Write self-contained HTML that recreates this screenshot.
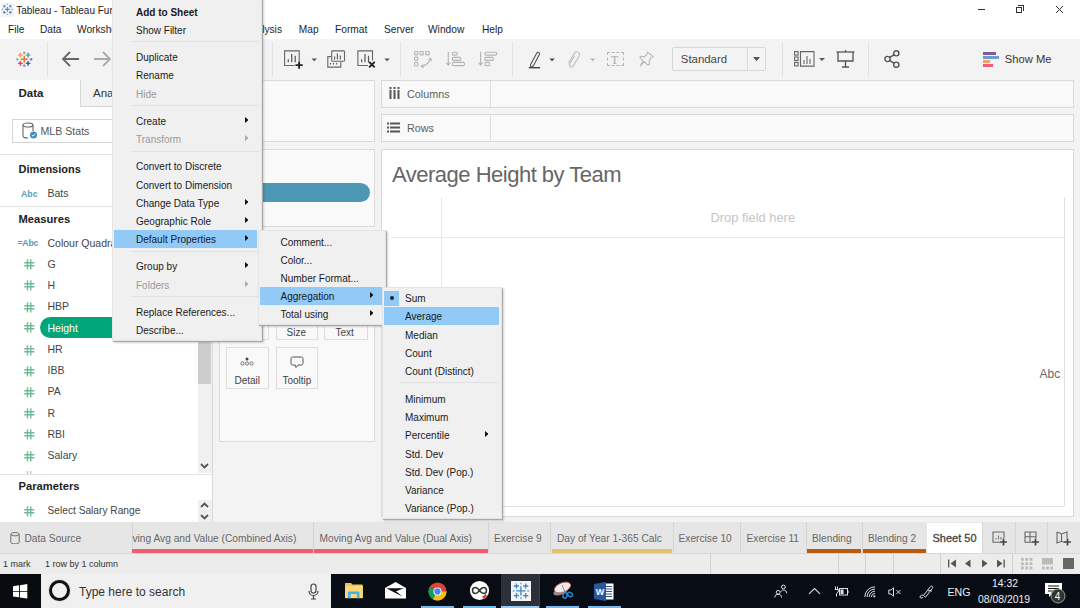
<!DOCTYPE html>
<html><head><meta charset="utf-8">
<style>
*{margin:0;padding:0;box-sizing:border-box}
html,body{width:1080px;height:608px;overflow:hidden;background:#fff;font-family:"Liberation Sans",sans-serif;color:#333}
.a{position:absolute}
.t{position:absolute;white-space:nowrap;line-height:1}
.mb{font-size:10.2px;color:#1e1e1e;top:25.3px}
.li{font-size:10.5px;color:#444}
.hash{position:absolute;width:11px;height:11px}
.menu{position:absolute;background:#f0f0f0;border:1px solid #e4e4e4;box-shadow:1px 1px 0 #a9a9a9,2px 2px 2px rgba(0,0,0,.18)}
.mi{font-size:10px;color:#1a1a1a}
.dis{color:#9a9a9a}
.sep{position:absolute;height:1px;background:#e0e0e0}
.tab{font-size:10.2px;color:#666;top:533.8px}
.vd{position:absolute;width:1px;background:#d0d0d0}
</style></head><body>
<!-- ============ TITLE BAR ============ -->
<div class="a" style="left:1.3px;top:2.5px;width:13.2px;height:14px;background:#f3f3f3"></div>
<svg class="a" style="left:0;top:0" width="16" height="18" viewBox="0 0 16 18"><g stroke="#4a8fc9" stroke-width="1.1"><path d="M7.4 7v4.8M5 9.4h4.8"/><path d="M4.3 5v2.6M3 6.3h2.6M10.3 5v2.6M9 6.3h2.6M4.3 11.1v2.6M3 12.4h2.6M10.3 11.1v2.6M9 12.4h2.6"/></g><g fill="#7fb0d9"><circle cx="7.3" cy="4.3" r=".8"/><circle cx="2.5" cy="9.4" r=".8"/><circle cx="12.1" cy="9.4" r=".8"/><circle cx="7.3" cy="14.3" r=".8"/></g></svg>
<div class="t" style="left:16.2px;top:5.6px;font-size:10px;color:#1e1e1e">Tableau - Tableau Fun</div>
<div class="a" style="left:978px;top:9px;width:7px;height:1px;background:#333"></div>
<div class="a" style="left:1016px;top:7px;width:6px;height:6px;border:1px solid #333"></div>
<div class="a" style="left:1018px;top:5px;width:6px;height:6px;border-top:1px solid #333;border-right:1px solid #333"></div>
<svg class="a" style="left:1055px;top:5px" width="9" height="9" viewBox="0 0 9 9"><path d="M1 1L8 8M8 1L1 8" stroke="#333" stroke-width="1"/></svg>
<!-- ============ MENU BAR ============ -->
<div class="t mb" style="left:8px">File</div>
<div class="t mb" style="left:40px">Data</div>
<div class="t mb" style="left:77px">Workshe</div>
<div class="t mb" style="left:256.5px">alysis</div>
<div class="t mb" style="left:298.8px">Map</div>
<div class="t mb" style="left:335px">Format</div>
<div class="t mb" style="left:384px">Server</div>
<div class="t mb" style="left:428px">Window</div>
<div class="t mb" style="left:482px">Help</div>
<!-- ============ TOOLBAR ============ -->
<div class="a" style="left:0;top:38.7px;width:1080px;height:42px;background:#f3f3f3;border-bottom:1px solid #d6d6d6"></div>
<div class="vd" style="left:47px;top:42px;height:35px;background:#e2e2e2"></div>
<div class="vd" style="left:272px;top:42px;height:35px;background:#e2e2e2"></div>
<div class="vd" style="left:400px;top:42px;height:35px;background:#e2e2e2"></div>
<div class="vd" style="left:512px;top:42px;height:35px;background:#e2e2e2"></div>
<div class="vd" style="left:782px;top:42px;height:35px;background:#e2e2e2"></div>
<div class="vd" style="left:868px;top:42px;height:35px;background:#e2e2e2"></div>
<!-- tableau logo -->
<svg class="a" style="left:16px;top:51.2px" width="16.5" height="16.5" viewBox="0 0 18 18">
<g stroke-width="1.6">
<path d="M9 5.2v7.6M5.2 9h7.6" stroke="#e8762d"/>
<path d="M4.8 2v5M2.3 4.5h5" stroke="#f0a13b"/>
<path d="M13.2 2v5M10.7 4.5h5" stroke="#5b9bb3"/>
<path d="M4.8 11v5M2.3 13.5h5" stroke="#d8405a"/>
<path d="M13.2 11v5M10.7 13.5h5" stroke="#2f5ea0"/>
</g>
<g stroke-width="1.3">
<path d="M9 0.5v3M7.5 2h3" stroke="#7aaecc"/>
<path d="M1.5 7.5v3M0 9h3" stroke="#7aaecc"/>
<path d="M16.5 7.5v3M15 9h3" stroke="#6a6fb0"/>
<path d="M9 14.5v3M7.5 16h3" stroke="#8d91c4"/>
</g></svg>
<!-- back / forward -->
<svg class="a" style="left:61px;top:50px" width="19" height="18" viewBox="0 0 19 18"><path d="M18 9H2M9 2L2 9l7 7" fill="none" stroke="#666" stroke-width="1.8"/></svg>
<svg class="a" style="left:93px;top:50px" width="19" height="18" viewBox="0 0 19 18"><path d="M1 9h16M10 2l7 7-7 7" fill="none" stroke="#aaa" stroke-width="1.8"/></svg>
<!-- new worksheet -->
<svg class="a" style="left:0;top:0" width="660" height="80" viewBox="0 0 660 80">
<g fill="none" stroke="#666" stroke-width="1.1">
<path d="M294.7 65.5H284.6V50.9h14.6v10"/>
<path d="M288.3 62.3v-3M291.7 62.3v-8.2M295.2 62.3v-6.6" stroke="#555" stroke-width="1.2"/>
<rect x="331.7" y="50.9" width="12.8" height="10.4" rx=".8"/>
<path d="M331 56.6h-3.2v10.5h13v-5"/>
<path d="M334.6 59.5v-3M337.4 59.5v-6M340.3 59.5v-4" stroke="#555" stroke-width="1.1"/>
<path d="M330.5 64.5v-1.5M333.5 64.5v-1.5M336.5 64.5v-1.5" stroke="#555"/>
<path d="M368 65.5H357.9V50.9h14.6v9.5"/>
<path d="M361.6 62.3v-3M365 62.3v-8.2M368.5 62.3v-6.6" stroke="#555" stroke-width="1.2"/>
</g>
<path d="M299.1 61.5v7.2M295.5 65.1h7.2" stroke="#222" stroke-width="1.9"/>
<path d="M369.1 61.8l5.6 5.6M374.7 61.8l-5.6 5.6" stroke="#222" stroke-width="1.9"/>
<path d="M311.5 58.6h5.5l-2.75 2.6z" fill="#555"/>
<path d="M384.3 58.6h5.5l-2.75 2.6z" fill="#555"/>
<g fill="none" stroke="#b5b5b5" stroke-width="1.1">
<rect x="414.6" y="51.5" width="3.2" height="3.4" rx=".6"/><rect x="420" y="51.5" width="3.3" height="3.4" rx=".6"/><rect x="425.6" y="51.5" width="3.6" height="3.4" rx=".6"/>
<rect x="414.6" y="57" width="3.2" height="3.5" rx=".6"/><rect x="414.6" y="62.5" width="3.2" height="3.5" rx=".6"/>
<path d="M421.5 66.5c4-1 7.5-3.5 9-7.8"/><path d="M428.6 60l2-1.8 1 2.6M423.3 64.7l-2 1.8 2.6 1"/>
<path d="M448.3 51.8v13M446.3 62.6l2 2.5 2-2.5"/>
<rect x="452.4" y="52.3" width="4.8" height="2.8" rx="1"/><rect x="452.4" y="57.4" width="8.2" height="3" rx="1"/><rect x="452.4" y="62.4" width="12" height="3.2" rx="1"/>
<path d="M480.6 51.8v13M478.6 62.6l2 2.5 2-2.5"/>
<rect x="484.9" y="52.3" width="11.8" height="2.8" rx="1"/><rect x="484.9" y="57.4" width="8.4" height="3" rx="1"/><rect x="484.9" y="62.4" width="4.8" height="3.2" rx="1"/>
</g>
<!-- pen -->
<path d="M530.6 64.5l6.2-11.6c.3-.6 1-.8 1.6-.5l.6.3c.6.3.8 1 .5 1.6l-6.2 11.6-2.7 1.3z" fill="none" stroke="#555" stroke-width="1.1" stroke-linejoin="round"/>
<path d="M528.8 67.7h11.3" stroke="#444" stroke-width="1.4"/>
<path d="M549.3 58.6h5.5l-2.75 2.6z" fill="#444"/>
<!-- paperclip -->
<path d="M574.5 56l-4.6 7.6c-.8 1.4-.4 2.6.6 3.1s2.2.1 3-1.3l5.3-9c1.2-2 .6-3.6-.8-4.3s-3-.2-4.2 1.8l-5.4 9.4" fill="none" stroke="#b9b9b9" stroke-width="1.05"/>
<path d="M590 58.6h5.5l-2.75 2.6z" fill="#b5b5b5"/>
<!-- pin -->
<path d="M647.5 52.2l5.9 4.4-2.5 1.2-1.7 3.4.2 3.1-1.6 1-3.2-3.8-4.3 4.4 2.7-5-3.3-3.4 1.4-1.2 3.1.6 2.6-2.2z" fill="none" stroke="#b3b3b3" stroke-width="1.05" stroke-linejoin="round"/>
</svg>
<!-- T box -->
<div class="a" style="left:607px;top:52px;width:17px;height:14px;border:1px dashed #b4b4b4"></div>
<div class="t" style="left:611px;top:54px;font-family:'Liberation Serif',serif;font-size:12px;color:#a8a8a8">T</div>
<!-- standard dropdown -->
<div class="a" style="left:672px;top:47px;width:94px;height:24px;background:#f4f4f4;border:1px solid #d6d6d6;border-radius:2px"></div>
<div class="a" style="left:747px;top:48px;width:1px;height:22px;background:#dcdcdc"></div>
<div class="t" style="left:680.8px;top:54px;font-size:11.4px;color:#444">Standard</div>
<svg class="a" style="left:753.3px;top:57.3px" width="7" height="4.5" viewBox="0 0 7 4.5"><path d="M0 0h7L3.5 4.2z" fill="#555"/></svg>
<!-- show cards icon -->
<svg class="a" style="left:794px;top:51px" width="21" height="16" viewBox="0 0 21 16"><g fill="none" stroke="#666" stroke-width="1.1"><rect x="0.6" y="0.6" width="3.5" height="3.5"/><rect x="0.6" y="6" width="3.5" height="3.5"/><rect x="0.6" y="11.4" width="3.5" height="3.5"/><path d="M6.5 0.6h13.5v14.5H6.5z"/><path d="M10 13V9M13 13V5M16 13V8"/></g></svg>
<svg class="a" style="left:819px;top:58px" width="7" height="4" viewBox="0 0 7 4"><path d="M0 0h6L3 3z" fill="#555"/></svg>
<!-- presentation -->
<svg class="a" style="left:836px;top:50px" width="19" height="18" viewBox="0 0 19 18"><g fill="none" stroke="#555" stroke-width="1.3"><path d="M0.5 2h18"/><path d="M9.5 0v2M2 2v9h15V2M9.5 11v6M6 17h7"/></g></svg>
<!-- share -->
<svg class="a" style="left:884px;top:50px" width="16" height="18" viewBox="0 0 16 18"><g fill="none" stroke="#555" stroke-width="1.4"><circle cx="3.5" cy="9" r="2.6"/><circle cx="12.3" cy="3.3" r="2.6"/><circle cx="12.3" cy="14.7" r="2.6"/><path d="M5.7 7.6l4.4-2.9M5.7 10.4l4.4 2.9"/></g></svg>
<!-- show me -->
<div class="a" style="left:983px;top:51.9px;width:13px;height:2.8px;background:#7b5f95"></div>
<div class="a" style="left:983px;top:55.9px;width:16.4px;height:2.7px;background:#6f9bcf"></div>
<div class="a" style="left:983px;top:60px;width:7px;height:2.6px;background:#f3a26b"></div>
<div class="a" style="left:983px;top:64px;width:10px;height:2.7px;background:#f0607a"></div>
<div class="t" style="left:1004.8px;top:53.5px;font-size:11.2px;color:#333">Show Me</div>

<!-- ============ LEFT PANE ============ -->
<div class="a" style="left:0;top:80px;width:212px;height:442px;background:#fff"></div>
<div class="a" style="left:212px;top:80px;width:1px;height:442px;background:#d8d8d8"></div>
<div class="a" style="left:80px;top:80px;width:132px;height:27px;background:#f3f3f3;border-left:1px solid #d6d6d6;border-bottom:1px solid #d6d6d6"></div>
<div class="t" style="left:18.5px;top:88px;font-size:11.5px;font-weight:bold;color:#222">Data</div>
<div class="t" style="left:93px;top:88px;font-size:11.5px;color:#333">Analytics</div>
<div class="a" style="left:12px;top:119px;width:200px;height:24px;border:1px solid #d6d6d6;background:#fff"></div>
<svg class="a" style="left:22px;top:122px" width="16" height="18" viewBox="0 0 16 18"><g fill="none" stroke="#666" stroke-width="1.1"><ellipse cx="6" cy="3" rx="5" ry="2"/><path d="M1 3v11c0 1.2 2.2 2 5 2"/><path d="M11 3v6"/></g><circle cx="11.5" cy="13" r="3.5" fill="#3b8fbf"/><path d="M9.8 13l1.2 1.2 2.2-2.4" fill="none" stroke="#fff" stroke-width="1"/></svg>
<div class="t" style="left:40.5px;top:126px;font-size:10.6px;color:#555">MLB Stats</div>
<div class="a" style="left:0;top:154px;width:212px;height:1px;background:#e3e3e3"></div>
<div class="t" style="left:18.5px;top:164px;font-size:11px;font-weight:bold;color:#222">Dimensions</div>
<div class="t" style="left:21px;top:189.5px;font-size:8.8px;font-weight:bold;color:#5b9db6">Abc</div>
<div class="t li" style="left:47.5px;top:188.0px">Bats</div>
<div class="a" style="left:0;top:206px;width:212px;height:1px;background:#e3e3e3"></div>
<div class="t" style="left:18.5px;top:213.5px;font-size:11.2px;font-weight:bold;color:#222">Measures</div>
<div class="t" style="left:17.5px;top:238.5px;font-size:8.8px;font-weight:bold;color:#5b9db6;letter-spacing:-0.3px">=Abc</div>
<div class="t li" style="left:47.5px;top:237.5px">Colour Quadrants</div>
<svg class="a" style="left:24px;top:259.1px" width="11" height="11" viewBox="0 0 11 11"><path d="M3.5 0.3v10.2M6.8 0.3v10.2M0.2 3.7h10.2M0.2 6.7h10.2" stroke="#6dbb96" stroke-width="1.35"/></svg>
<svg class="a" style="left:24px;top:280.3px" width="11" height="11" viewBox="0 0 11 11"><path d="M3.5 0.3v10.2M6.8 0.3v10.2M0.2 3.7h10.2M0.2 6.7h10.2" stroke="#6dbb96" stroke-width="1.35"/></svg>
<svg class="a" style="left:24px;top:301.5px" width="11" height="11" viewBox="0 0 11 11"><path d="M3.5 0.3v10.2M6.8 0.3v10.2M0.2 3.7h10.2M0.2 6.7h10.2" stroke="#6dbb96" stroke-width="1.35"/></svg>
<svg class="a" style="left:24px;top:322.2px" width="11" height="11" viewBox="0 0 11 11"><path d="M3.5 0.3v10.2M6.8 0.3v10.2M0.2 3.7h10.2M0.2 6.7h10.2" stroke="#6dbb96" stroke-width="1.35"/></svg>
<svg class="a" style="left:24px;top:344.5px" width="11" height="11" viewBox="0 0 11 11"><path d="M3.5 0.3v10.2M6.8 0.3v10.2M0.2 3.7h10.2M0.2 6.7h10.2" stroke="#6dbb96" stroke-width="1.35"/></svg>
<svg class="a" style="left:24px;top:365.8px" width="11" height="11" viewBox="0 0 11 11"><path d="M3.5 0.3v10.2M6.8 0.3v10.2M0.2 3.7h10.2M0.2 6.7h10.2" stroke="#6dbb96" stroke-width="1.35"/></svg>
<svg class="a" style="left:24px;top:386.7px" width="11" height="11" viewBox="0 0 11 11"><path d="M3.5 0.3v10.2M6.8 0.3v10.2M0.2 3.7h10.2M0.2 6.7h10.2" stroke="#6dbb96" stroke-width="1.35"/></svg>
<svg class="a" style="left:24px;top:407.9px" width="11" height="11" viewBox="0 0 11 11"><path d="M3.5 0.3v10.2M6.8 0.3v10.2M0.2 3.7h10.2M0.2 6.7h10.2" stroke="#6dbb96" stroke-width="1.35"/></svg>
<svg class="a" style="left:24px;top:428.9px" width="11" height="11" viewBox="0 0 11 11"><path d="M3.5 0.3v10.2M6.8 0.3v10.2M0.2 3.7h10.2M0.2 6.7h10.2" stroke="#6dbb96" stroke-width="1.35"/></svg>
<svg class="a" style="left:24px;top:450.8px" width="11" height="11" viewBox="0 0 11 11"><path d="M3.5 0.3v10.2M6.8 0.3v10.2M0.2 3.7h10.2M0.2 6.7h10.2" stroke="#6dbb96" stroke-width="1.35"/></svg>
<svg class="a" style="left:24px;top:506.0px" width="11" height="11" viewBox="0 0 11 11"><path d="M3.5 0.3v10.2M6.8 0.3v10.2M0.2 3.7h10.2M0.2 6.7h10.2" stroke="#6dbb96" stroke-width="1.35"/></svg>

<!-- Height pill -->
<div class="a" style="left:40px;top:317px;width:100px;height:21px;background:#00a67a;border-radius:10.5px"></div>
<div class="t" style="left:47.5px;top:322.5px;font-size:10.5px;color:#fff">Height</div>
<div class="t li" style="left:47.5px;top:259.0px">G</div>
<div class="t li" style="left:47.5px;top:280.0px">H</div>
<div class="t li" style="left:47.5px;top:301.0px">HBP</div>
<div class="t li" style="left:47.5px;top:344.0px">HR</div>
<div class="t li" style="left:47.5px;top:365.0px">IBB</div>
<div class="t li" style="left:47.5px;top:386.0px">PA</div>
<div class="t li" style="left:47.5px;top:407.5px">R</div>
<div class="t li" style="left:47.5px;top:428.5px">RBI</div>
<div class="t li" style="left:47.5px;top:450.0px">Salary</div>
<!-- scrollbar -->
<div class="a" style="left:198px;top:80px;width:13.5px;height:393px;background:#f0f0f0"></div>
<div class="a" style="left:198px;top:250px;width:13px;height:134.3px;background:#cdcdcd"></div>
<svg class="a" style="left:200px;top:463px" width="9" height="6" viewBox="0 0 9 6"><path d="M1 1l3.5 3.5L8 1" fill="none" stroke="#555" stroke-width="1.8"/></svg>
<div class="a" style="left:0;top:471px;width:198px;height:3px;overflow:hidden"><svg class="a" style="left:24px;top:-2px" width="11" height="11" viewBox="0 0 11 11"><path d="M3.5 0.3v10.2M6.8 0.3v10.2" stroke="#a5d6bf" stroke-width="1.35"/></svg></div>
<div class="a" style="left:0;top:474px;width:212px;height:1px;background:#e3e3e3"></div>
<div class="t" style="left:18.5px;top:481px;font-size:11.2px;font-weight:bold;color:#222">Parameters</div>
<div class="t" style="left:47.5px;top:506.3px;font-size:10.2px;color:#444">Select Salary Range</div>
<div class="a" style="left:198px;top:500px;width:13.5px;height:22px;background:#f0f0f0"></div>
<svg class="a" style="left:200px;top:502px" width="9" height="6" viewBox="0 0 9 6"><path d="M1 5l3.5-3.5L8 5" fill="none" stroke="#555" stroke-width="1.8"/></svg>
<svg class="a" style="left:200px;top:514px" width="9" height="6" viewBox="0 0 9 6"><path d="M1 1l3.5 3.5L8 1" fill="none" stroke="#555" stroke-width="1.8"/></svg>

<!-- ============ CARDS PANE ============ -->
<div class="a" style="left:213px;top:80px;width:168px;height:442px;background:#f3f3f3"></div>
<div class="a" style="left:219px;top:80px;width:156px;height:62px;background:#f9f9f9;border:1px solid #dadada"></div>
<div class="a" style="left:219px;top:149px;width:156px;height:78px;background:#f9f9f9;border:1px solid #dadada"></div>
<div class="a" style="left:219px;top:234px;width:156px;height:208px;background:#f9f9f9;border:1px solid #dadada"></div>
<div class="a" style="left:224px;top:183px;width:146px;height:19px;background:#4b97b4;border-radius:9.5px"></div>
<div class="a" style="left:226px;top:325px;width:43px;height:15px;border:1px solid #dcdcdc;background:#f9f9f9"></div>
<div class="a" style="left:275.5px;top:325px;width:42px;height:15px;border:1px solid #dcdcdc;background:#f9f9f9"></div>
<div class="a" style="left:324px;top:325px;width:43.5px;height:15px;border:1px solid #dcdcdc;background:#f9f9f9"></div>
<div class="t" style="left:286.5px;top:327.7px;font-size:10px;color:#444">Size</div>
<div class="t" style="left:335.5px;top:327.7px;font-size:10px;color:#444">Text</div>
<div class="a" style="left:226px;top:346.5px;width:43px;height:42px;border:1px solid #dcdcdc;background:#f9f9f9"></div>
<div class="a" style="left:275.5px;top:346.5px;width:42px;height:42px;border:1px solid #dcdcdc;background:#f9f9f9"></div>
<svg class="a" style="left:240px;top:357px" width="14" height="9" viewBox="0 0 14 9"><circle cx="7" cy="2" r="1.5" fill="#444"/><g fill="none" stroke="#666" stroke-width="0.9"><circle cx="2.5" cy="6.5" r="1.6"/><circle cx="7" cy="6.5" r="1.6"/><circle cx="11.5" cy="6.5" r="1.6"/></g></svg>
<div class="t" style="left:234.5px;top:375.5px;font-size:10px;color:#444">Detail</div>
<svg class="a" style="left:290px;top:355.5px" width="14" height="13" viewBox="0 0 14 13"><path d="M2.5 1h9c.8 0 1.5.7 1.5 1.5v5c0 .8-.7 1.5-1.5 1.5H8l-2 2.5-.8-2.5H2.5C1.7 9 1 8.3 1 7.5v-5C1 1.7 1.7 1 2.5 1z" fill="none" stroke="#555" stroke-width="1"/></svg>
<div class="t" style="left:282.5px;top:375.5px;font-size:10px;color:#444">Tooltip</div>

<!-- ============ MAIN ============ -->
<div class="a" style="left:381px;top:80px;width:699px;height:442px;background:#f3f3f3"></div>
<div class="a" style="left:381px;top:80px;width:693px;height:28px;background:#f9f9f9;border:1px solid #d9d9d9"></div>
<div class="a" style="left:489.8px;top:81px;width:1px;height:26px;background:#dedede"></div>
<div class="a" style="left:381px;top:114px;width:693px;height:28px;background:#f9f9f9;border:1px solid #d9d9d9"></div>
<div class="a" style="left:489.8px;top:115px;width:1px;height:26px;background:#dedede"></div>
<svg class="a" style="left:388.5px;top:86.8px" width="12" height="12" viewBox="0 0 12 12"><g fill="#555"><rect x="0.5" y="0" width="2" height="2"/><rect x="4.5" y="0" width="2" height="2"/><rect x="8.5" y="0" width="2" height="2"/><rect x="0.5" y="3" width="2" height="9"/><rect x="4.5" y="3" width="2" height="9"/><rect x="8.5" y="3" width="2" height="9"/></g></svg>
<div class="t" style="left:407px;top:89px;font-size:10.8px;color:#606060">Columns</div>
<svg class="a" style="left:387px;top:122px" width="13" height="11" viewBox="0 0 13 11"><g fill="#555"><rect x="0" y="0.5" width="2" height="2"/><rect x="0" y="4.5" width="2" height="2"/><rect x="0" y="8.5" width="2" height="2"/><rect x="3" y="0.5" width="10" height="2"/><rect x="3" y="4.5" width="10" height="2"/><rect x="3" y="8.5" width="10" height="2"/></g></svg>
<div class="t" style="left:407px;top:123.2px;font-size:10.8px;color:#606060">Rows</div>
<div class="a" style="left:381px;top:149px;width:693px;height:368px;background:#fff;border:1px solid #d9d9d9"></div>
<div class="t" style="left:392px;top:164px;font-size:22px;color:#666;letter-spacing:-0.5px">Average Height by Team</div>
<div class="a" style="left:441px;top:197px;width:1px;height:309px;background:#e6e6e6"></div>
<div class="a" style="left:391px;top:237.3px;width:673px;height:1px;background:#e6e6e6"></div>
<div class="a" style="left:1063.5px;top:197px;width:1px;height:309px;background:#e0e0e0"></div>
<div class="a" style="left:441px;top:506px;width:623px;height:1px;background:#e0e0e0"></div>
<div class="t" style="left:710.5px;top:212.3px;font-size:12.9px;color:#c6c6c6">Drop field here</div>
<div class="t" style="left:1039.5px;top:367.5px;font-size:12px;color:#666">Abc</div>

<!-- ============ TABS ============ -->
<div class="a" style="left:0;top:522px;width:1080px;height:31px;background:#e6e6e6"></div>
<svg class="a" style="left:9.5px;top:531.5px" width="10" height="12.5" viewBox="0 0 10 12.5"><g fill="none" stroke="#707070" stroke-width="1"><ellipse cx="5" cy="2.2" rx="4.2" ry="1.7"/><path d="M0.8 2.2v8c0 .9 1.9 1.7 4.2 1.7s4.2-.8 4.2-1.7v-8"/></g></svg>
<div class="t tab" style="left:24.5px">Data Source</div>
<div class="vd" style="left:132px;top:522px;height:31px;background:#d4d4d4"></div>
<div class="t tab" style="left:132.5px">ving Avg and Value (Combined Axis)</div>
<div class="a" style="left:132px;top:549px;width:180.5px;height:4px;background:#f05b6f"></div>
<div class="vd" style="left:313px;top:522px;height:31px;background:#d4d4d4"></div>
<div class="a" style="left:314px;top:549px;width:174px;height:4px;background:#f05b6f"></div>
<div class="t tab" style="left:319.5px">Moving Avg and Value (Dual Axis)</div>
<div class="vd" style="left:488px;top:522px;height:31px;background:#d4d4d4"></div>
<div class="t tab" style="left:494px">Exercise 9</div>
<div class="vd" style="left:550px;top:522px;height:31px;background:#d4d4d4"></div>
<div class="a" style="left:551.5px;top:549px;width:120.5px;height:4px;background:#e0c36c"></div>
<div class="t tab" style="left:557px">Day of Year 1-365 Calc</div>
<div class="vd" style="left:672.5px;top:522px;height:31px;background:#d4d4d4"></div>
<div class="t tab" style="left:678.5px">Exercise 10</div>
<div class="vd" style="left:740px;top:522px;height:31px;background:#d4d4d4"></div>
<div class="t tab" style="left:746.5px">Exercise 11</div>
<div class="vd" style="left:806px;top:522px;height:31px;background:#d4d4d4"></div>
<div class="a" style="left:806.5px;top:549px;width:54.5px;height:4px;background:#b95a0e"></div>
<div class="t tab" style="left:812px">Blending</div>
<div class="vd" style="left:862px;top:522px;height:31px;background:#d4d4d4"></div>
<div class="a" style="left:863px;top:549px;width:62.5px;height:4px;background:#b95a0e"></div>
<div class="t tab" style="left:868px">Blending 2</div>
<div class="a" style="left:927px;top:523px;width:55px;height:30px;background:#fff"></div>
<div class="t" style="left:932.5px;top:532.5px;font-size:11px;color:#444;-webkit-text-stroke:0.3px #444">Sheet 50</div>
<div class="vd" style="left:982px;top:522px;height:31px;background:#d4d4d4"></div>
<div class="vd" style="left:1014.5px;top:522px;height:31px;background:#d4d4d4"></div>
<div class="vd" style="left:1046.5px;top:522px;height:31px;background:#d4d4d4"></div>
<svg class="a" style="left:991.5px;top:531px" width="16" height="15" viewBox="0 0 16 15"><g fill="none" stroke="#666" stroke-width="1.1"><path d="M8 11.2H1V1h11v6"/><path d="M4 8.5V7M6.5 8.5V4.5M9 8.5V6" stroke="#777"/></g><path d="M11.5 7.5v7M8 11h7" stroke="#444" stroke-width="1.7"/></svg>
<svg class="a" style="left:1023.5px;top:531px" width="16" height="15" viewBox="0 0 16 15"><g fill="none" stroke="#666" stroke-width="1.1"><path d="M8 11.2H1V1h11v6M1 5.8h11M6 1v10.2"/></g><path d="M11.5 7.5v7M8 11h7" stroke="#444" stroke-width="1.7"/></svg>
<svg class="a" style="left:1056px;top:531px" width="16" height="15" viewBox="0 0 16 15"><g fill="none" stroke="#666" stroke-width="1.1"><path d="M1 1l4.5 2 5.5-2v6M8.5 11.5l-3-1.2L1 12V1M5.5 3v7.3"/></g><path d="M11.5 7.5v7M8 11h7" stroke="#444" stroke-width="1.7"/></svg>

<!-- ============ STATUS ============ -->
<div class="a" style="left:0;top:553px;width:1080px;height:21px;background:#ececec;border-top:1px solid #d8d8d8"></div>
<div class="t" style="left:3px;top:559.5px;font-size:9px;color:#333">1 mark</div>
<div class="t" style="left:45px;top:559.5px;font-size:9px;color:#333">1 row by 1 column</div>
<div class="vd" style="left:709.5px;top:554px;height:20px"></div>
<div class="vd" style="left:837.5px;top:554px;height:20px"></div>
<div class="vd" style="left:865px;top:554px;height:20px"></div>
<div class="vd" style="left:892.5px;top:554px;height:20px"></div>
<div class="vd" style="left:940px;top:554px;height:20px"></div>
<div class="vd" style="left:1011.5px;top:554px;height:20px"></div>
<svg class="a" style="left:947px;top:559px" width="60" height="9" viewBox="0 0 60 9"><g fill="#555"><rect x="1" y="0.5" width="1.3" height="8"/><path d="M9 0.5v8L3.5 4.5z"/><path d="M23.5 0.5v8L18 4.5z"/><path d="M35 0.5v8l5.5-4z"/><path d="M50 0.5v8l5.5-4z"/><rect x="56.5" y="0.5" width="1.3" height="8"/></g></svg>
<svg class="a" style="left:1021px;top:558.2px" width="11.5" height="11.5" viewBox="0 0 11.5 11.5"><g fill="#bbb"><rect x="0" y="0" width="2.8" height="2.8"/><rect x="4.3" y="0" width="2.8" height="2.8"/><rect x="8.6" y="0" width="2.8" height="2.8"/><rect x="0" y="4.3" width="2.8" height="2.8"/><rect x="4.3" y="4.3" width="2.8" height="2.8"/><rect x="8.6" y="4.3" width="2.8" height="2.8"/><rect x="0" y="8.6" width="2.8" height="2.8"/><rect x="4.3" y="8.6" width="2.8" height="2.8"/><rect x="8.6" y="8.6" width="2.8" height="2.8"/></g></svg>
<svg class="a" style="left:1042.2px;top:558.2px" width="11" height="11.5" viewBox="0 0 11 11.5"><g fill="#bbb"><rect x="0" y="0" width="11" height="6.5"/><rect x="0" y="8.6" width="2.8" height="2.8"/><rect x="4.1" y="8.6" width="2.8" height="2.8"/><rect x="8.2" y="8.6" width="2.8" height="2.8"/></g></svg>
<div class="a" style="left:1063.3px;top:558.3px;width:11px;height:11px;background:#666"></div>

<!-- ============ TASKBAR ============ -->
<div class="a" style="left:0;top:574px;width:1080px;height:34px;background:#080c15"></div>
<div class="a" style="left:0;top:574px;width:40.5px;height:34px;background:#080b10"></div>
<svg class="a" style="left:13px;top:584px" width="14.5" height="14.5" viewBox="0 0 14.5 14.5"><g fill="#fff"><path d="M0 2.2l6-.9v5.6H0z"/><path d="M6.9 1.2L14.3 0v6.9H6.9z"/><path d="M0 7.8h6v5.5l-6-.9z"/><path d="M6.9 7.8h7.4v6.7l-7.4-1.1z"/></g></svg>
<div class="a" style="left:40.5px;top:574px;width:290px;height:34px;background:#f0f0f0"></div>
<div class="a" style="left:48.6px;top:580.3px;width:21.2px;height:21.2px;border:3.2px solid #111;border-radius:50%;box-shadow:0 0 1px #555"></div>
<div class="t" style="left:79px;top:586.2px;font-size:12px;color:#333">Type here to search</div>
<svg class="a" style="left:308px;top:583px" width="11" height="17" viewBox="0 0 11 17"><g fill="none" stroke="#444" stroke-width="1.2"><rect x="3" y="1" width="5" height="9" rx="2.5"/><path d="M1 8c0 2.5 2 4.5 4.5 4.5S10 10.5 10 8M5.5 12.5V16M3 16h5"/></g></svg>
<!-- explorer -->
<svg class="a" style="left:340px;top:578px" width="28" height="26" viewBox="340 578 28 26"><path d="M345 583.5c0-.4.3-.6.6-.6h5.5l1.3 1.6h9.8c.4 0 .6.3.6.6V598H345z" fill="#f1c34a"/><path d="M345 586h17.8v12.2H345z" fill="#f8d878"/><path d="M348 598.3v-5.3c0-.9.7-1.6 1.6-1.6h8.3c.9 0 1.6.7 1.6 1.6v5.3h-2.6v-4.3h-6.3v4.3z" fill="#3ab4ee"/></svg>
<!-- mail -->
<svg class="a" style="left:384px;top:581px" width="23" height="19" viewBox="0 0 23 19"><path d="M1 7L11.6 1 22 7v10.6H1z" fill="#fff"/><path d="M2.5 7.3h17.5l-8 3 6.5 5.2-9-4.6z" fill="#0a0d14"/></svg>
<!-- chrome -->
<svg class="a" style="left:428px;top:582px" width="19" height="19" viewBox="0 0 20 20"><circle cx="10" cy="10" r="9.5" fill="#db4437"/><path d="M10 10L1.8 5.2A9.5 9.5 0 0 0 5.25 18.2z" fill="#0f9d58"/><path d="M10 10l-4.75 8.2A9.5 9.5 0 0 0 19.5 10z" fill="#f4c20d"/><circle cx="10" cy="10" r="4.3" fill="#fff"/><circle cx="10" cy="10" r="3.3" fill="#4285f4"/></svg>
<!-- cc -->
<svg class="a" style="left:469px;top:580px" width="21" height="21" viewBox="0 0 21 21"><circle cx="10.5" cy="10.5" r="9.6" fill="#fff"/><path d="M10.5 10.5c-1.5-2-2.5-3-4-3a3 3 0 0 0 0 6c1.5 0 2.5-1 4-3s2.5-3 4-3a3 3 0 0 1 0 6c-1.5 0-2.5-1-4-3z" fill="none" stroke="#333" stroke-width="1.5"/><path d="M13 17l3.5-3 1.5 2-3 3z" fill="#e53935"/></svg>
<!-- tableau highlighted -->
<div class="a" style="left:501px;top:574px;width:37.5px;height:34px;background:#2c3038"></div>
<div class="a" style="left:538.5px;top:574px;width:1px;height:34px;background:#3a3e46"></div>
<div class="a" style="left:511.3px;top:581px;width:19.6px;height:19.7px;background:#f3f4f6"></div>
<svg class="a" style="left:500px;top:574px" width="40" height="34" viewBox="500 574 40 34"><g stroke="#3f86c4" stroke-width="1.3"><path d="M520.9 586.2v9.4M516.2 590.9h9.4"/><path d="M516.4 583.4v5.2M513.8 586h5.2M525.7 583.4v5.2M523.1 586h5.2M516.4 593.1v5.2M513.8 595.7h5.2M525.7 593.1v5.2M523.1 595.7h5.2"/></g><g fill="#8fbbe0"><circle cx="520.9" cy="583.5" r="1.1"/><circle cx="513.6" cy="590.9" r="1.1"/><circle cx="528.2" cy="590.9" r="1.1"/><circle cx="520.9" cy="598.2" r="1.1"/></g></svg>
<!-- snip -->
<svg class="a" style="left:550px;top:578px" width="30" height="28" viewBox="550 578 30 28"><ellipse cx="560.5" cy="591.5" rx="7.5" ry="3.3" transform="rotate(-20 560.5 591.5)" fill="#8d8d8d"/><ellipse cx="562.5" cy="587.5" rx="8.6" ry="4.6" transform="rotate(-22 562.5 587.5)" fill="#ececec" stroke="#d06a5a" stroke-width=".8"/><path d="M562 585l3.5 8" stroke="#777" stroke-width=".8"/><g fill="none" stroke="#2a8fd8" stroke-width="1.4"><ellipse cx="565" cy="595.5" rx="2" ry="2.8" transform="rotate(20 565 595.5)"/><ellipse cx="570" cy="594.5" rx="2.6" ry="2" transform="rotate(20 570 594.5)"/></g></svg>
<!-- word -->
<svg class="a" style="left:594px;top:582px" width="20" height="19" viewBox="0 0 20 19"><rect x="7" y="1.5" width="12.5" height="16" fill="#fff"/><path d="M9 4.5h9M9 7h9M9 9.5h9M9 12h9M9 14.5h9" stroke="#2b579a" stroke-width="1"/><path d="M0 2l12-2v19L0 17z" fill="#2b579a"/><text x="1.8" y="13" font-family="Liberation Sans" font-weight="bold" font-size="9" fill="#fff">W</text></svg>
<div class="a" style="left:421px;top:606px;width:33px;height:2px;background:#76b9ed"></div>
<div class="a" style="left:463px;top:606px;width:33px;height:2px;background:#76b9ed"></div>
<div class="a" style="left:501px;top:606px;width:37.5px;height:2px;background:#99ccf5"></div>
<div class="a" style="left:546px;top:606px;width:33px;height:2px;background:#76b9ed"></div>
<div class="a" style="left:588px;top:606px;width:33px;height:2px;background:#76b9ed"></div>
<!-- tray -->
<svg class="a" style="left:774px;top:584px" width="14" height="14" viewBox="0 0 14 14"><g fill="none" stroke="#e6e6e6" stroke-width="1"><circle cx="4.2" cy="8.3" r="1.9"/><path d="M0.8 13.5c0-2 1.5-3.2 3.4-3.2s3.4 1.2 3.4 3.2"/><circle cx="9.4" cy="3" r="1.9"/><path d="M7 7.6c.5-.9 1.4-1.5 2.4-1.5 1.9 0 3.4 1.2 3.4 3.2"/></g></svg>
<svg class="a" style="left:808px;top:587px" width="13" height="8" viewBox="0 0 13 8"><path d="M1 6.8l5.5-5.3L12 6.8" fill="none" stroke="#ddd" stroke-width="1.1"/></svg>
<svg class="a" style="left:834px;top:585.5px" width="15" height="11" viewBox="0 0 15 11"><g fill="none" stroke="#e0e0e0" stroke-width="1"><path d="M1.5 0.5v3M3.5 0.5v3M0.8 3.5h3.5v2.5l-1.8 1.5v3"/><rect x="5.5" y="2.5" width="8" height="6.5"/><path d="M14 4.5v2.5"/></g><rect x="6.5" y="3.5" width="3" height="4.5" fill="#e0e0e0"/></svg>
<svg class="a" style="left:863.5px;top:585.5px" width="12" height="12" viewBox="0 0 12 12"><g fill="none" stroke="#ddd" stroke-width="1"><path d="M0.8 11A10.2 10.2 0 0 1 11 0.8M3 11A8 8 0 0 1 11 3M5.2 11A5.8 5.8 0 0 1 11 5.2M7.4 11A3.6 3.6 0 0 1 11 7.4"/></g><circle cx="10.3" cy="10.3" r="1.1" fill="#ddd"/></svg>
<svg class="a" style="left:887.5px;top:586.5px" width="14" height="10" viewBox="0 0 14 10"><g fill="none" stroke="#ddd" stroke-width="1"><path d="M0.8 3h2.2L5.5 0.8v8.4L3 7H0.8z"/><path d="M8.5 3l4 4M12.5 3l-4 4"/></g></svg>
<svg class="a" style="left:918.5px;top:584px" width="15" height="15" viewBox="0 0 15 15"><g fill="none" stroke="#ddd" stroke-width="1"><path d="M4.5 11.5L11.5 2.5c.6-.8 1.6-.6 2 .1s.3 1.4-.3 2L6.5 13.2z"/><path d="M4.5 11.5c-1.5-1-3.5 0-3.5 1.5s2 1 3 .5M9 7c1.5-1 3-.5 4 .5"/></g></svg>
<div class="t" style="left:947.5px;top:586.5px;font-size:10.6px;color:#eee">ENG</div>
<div class="t" style="left:992px;top:579px;font-size:10.4px;color:#eee">14:32</div>
<div class="t" style="left:978px;top:595px;font-size:10.4px;color:#eee">08/08/2019</div>
<svg class="a" style="left:1044px;top:582px" width="24" height="24" viewBox="0 0 24 24"><path d="M1 1h17v11H8l-3 3v-3H1z" fill="#fff"/><path d="M4 4h11M4 6.5h11M4 9h8" stroke="#111" stroke-width="1"/><circle cx="14" cy="14" r="7" fill="#333" stroke="#999" stroke-width="1"/><text x="10.8" y="18" font-family="Liberation Sans" font-size="10" fill="#fff">4</text></svg>

<!-- ============ CONTEXT MENUS ============ -->
<div class="menu" style="left:112px;top:-3px;width:149.5px;height:344px"></div>
<div class="t mi" style="left:136px;top:7.6px;font-weight:bold;">Add to Sheet</div>
<div class="t mi" style="left:136px;top:25.8px;">Show Filter</div>
<div class="sep" style="left:132px;top:41.4px;width:127px"></div>
<div class="t mi" style="left:136px;top:53.1px;">Duplicate</div>
<div class="t mi" style="left:136px;top:71.3px;">Rename</div>
<div class="t mi dis" style="left:136px;top:89.5px;">Hide</div>
<div class="sep" style="left:132px;top:105.1px;width:127px"></div>
<div class="t mi" style="left:136px;top:116.8px;">Create</div>
<svg class="a" style="left:244.8px;top:116.7px" width="3.5" height="6" viewBox="0 0 3.5 6"><path d="M0 0l3.5 3-3.5 3z" fill="#111"/></svg>
<div class="t mi dis" style="left:136px;top:135.0px;">Transform</div>
<svg class="a" style="left:244.8px;top:134.9px" width="3.5" height="6" viewBox="0 0 3.5 6"><path d="M0 0l3.5 3-3.5 3z" fill="#aaa"/></svg>
<div class="sep" style="left:132px;top:150.6px;width:127px"></div>
<div class="t mi" style="left:136px;top:162.3px;">Convert to Discrete</div>
<div class="t mi" style="left:136px;top:180.5px;">Convert to Dimension</div>
<div class="t mi" style="left:136px;top:198.7px;">Change Data Type</div>
<svg class="a" style="left:244.8px;top:198.6px" width="3.5" height="6" viewBox="0 0 3.5 6"><path d="M0 0l3.5 3-3.5 3z" fill="#111"/></svg>
<div class="t mi" style="left:136px;top:216.9px;">Geographic Role</div>
<svg class="a" style="left:244.8px;top:216.8px" width="3.5" height="6" viewBox="0 0 3.5 6"><path d="M0 0l3.5 3-3.5 3z" fill="#111"/></svg>
<div class="a" style="left:114px;top:229.9px;width:142.6px;height:18.2px;background:#91c9f7"></div>
<div class="t mi" style="left:136px;top:235.1px;">Default Properties</div>
<svg class="a" style="left:244.8px;top:235.0px" width="3.5" height="6" viewBox="0 0 3.5 6"><path d="M0 0l3.5 3-3.5 3z" fill="#111"/></svg>
<div class="sep" style="left:132px;top:250.7px;width:127px"></div>
<div class="t mi" style="left:136px;top:262.4px;">Group by</div>
<svg class="a" style="left:244.8px;top:262.3px" width="3.5" height="6" viewBox="0 0 3.5 6"><path d="M0 0l3.5 3-3.5 3z" fill="#111"/></svg>
<div class="t mi dis" style="left:136px;top:280.6px;">Folders</div>
<svg class="a" style="left:244.8px;top:280.5px" width="3.5" height="6" viewBox="0 0 3.5 6"><path d="M0 0l3.5 3-3.5 3z" fill="#aaa"/></svg>
<div class="sep" style="left:132px;top:296.2px;width:127px"></div>
<div class="t mi" style="left:136px;top:307.9px;">Replace References...</div>
<div class="t mi" style="left:136px;top:326.1px;">Describe...</div>
<!-- submenu 1 -->
<div class="menu" style="left:257.5px;top:230px;width:128.8px;height:94.5px"></div>
<div class="t mi" style="left:280.5px;top:237.5px">Comment...</div>
<div class="t mi" style="left:280.5px;top:255.7px">Color...</div>
<div class="t mi" style="left:280.5px;top:273.9px">Number Format...</div>
<div class="a" style="left:259.5px;top:286.9px;width:122px;height:18.2px;background:#91c9f7"></div>
<div class="t mi" style="left:280.5px;top:292.1px">Aggregation</div>
<svg class="a" style="left:369.8px;top:292.0px" width="3.5" height="6" viewBox="0 0 3.5 6"><path d="M0 0l3.5 3-3.5 3z" fill="#111"/></svg>
<div class="t mi" style="left:280.5px;top:310.3px">Total using</div>
<svg class="a" style="left:369.8px;top:310.2px" width="3.5" height="6" viewBox="0 0 3.5 6"><path d="M0 0l3.5 3-3.5 3z" fill="#111"/></svg>
<!-- submenu 2 -->
<div class="menu" style="left:382px;top:286.8px;width:119.5px;height:232.2px"></div>
<div class="a" style="left:384px;top:290.5px;width:15px;height:15px;background:#91c9f7"></div>
<div class="a" style="left:389.5px;top:295.5px;width:4.5px;height:4.5px;background:#222;border-radius:50%"></div>
<div class="t mi" style="left:405px;top:294.1px">Sum</div>
<div class="a" style="left:384px;top:307.1px;width:115px;height:18.2px;background:#91c9f7"></div>
<div class="t mi" style="left:405px;top:312.4px">Average</div>
<div class="t mi" style="left:405px;top:330.6px">Median</div>
<div class="t mi" style="left:405px;top:348.9px">Count</div>
<div class="t mi" style="left:405px;top:367.1px">Count (Distinct)</div>
<div class="sep" style="left:401px;top:381.9px;width:98px"></div>
<div class="t mi" style="left:405px;top:394.9px">Minimum</div>
<div class="t mi" style="left:405px;top:413.1px">Maximum</div>
<div class="t mi" style="left:405px;top:431.4px">Percentile</div>
<svg class="a" style="left:484.8px;top:431.2px" width="3.5" height="6" viewBox="0 0 3.5 6"><path d="M0 0l3.5 3-3.5 3z" fill="#111"/></svg>
<div class="t mi" style="left:405px;top:449.6px">Std. Dev</div>
<div class="t mi" style="left:405px;top:467.9px">Std. Dev (Pop.)</div>
<div class="t mi" style="left:405px;top:486.1px">Variance</div>
<div class="t mi" style="left:405px;top:504.4px">Variance (Pop.)</div>

</body></html>
